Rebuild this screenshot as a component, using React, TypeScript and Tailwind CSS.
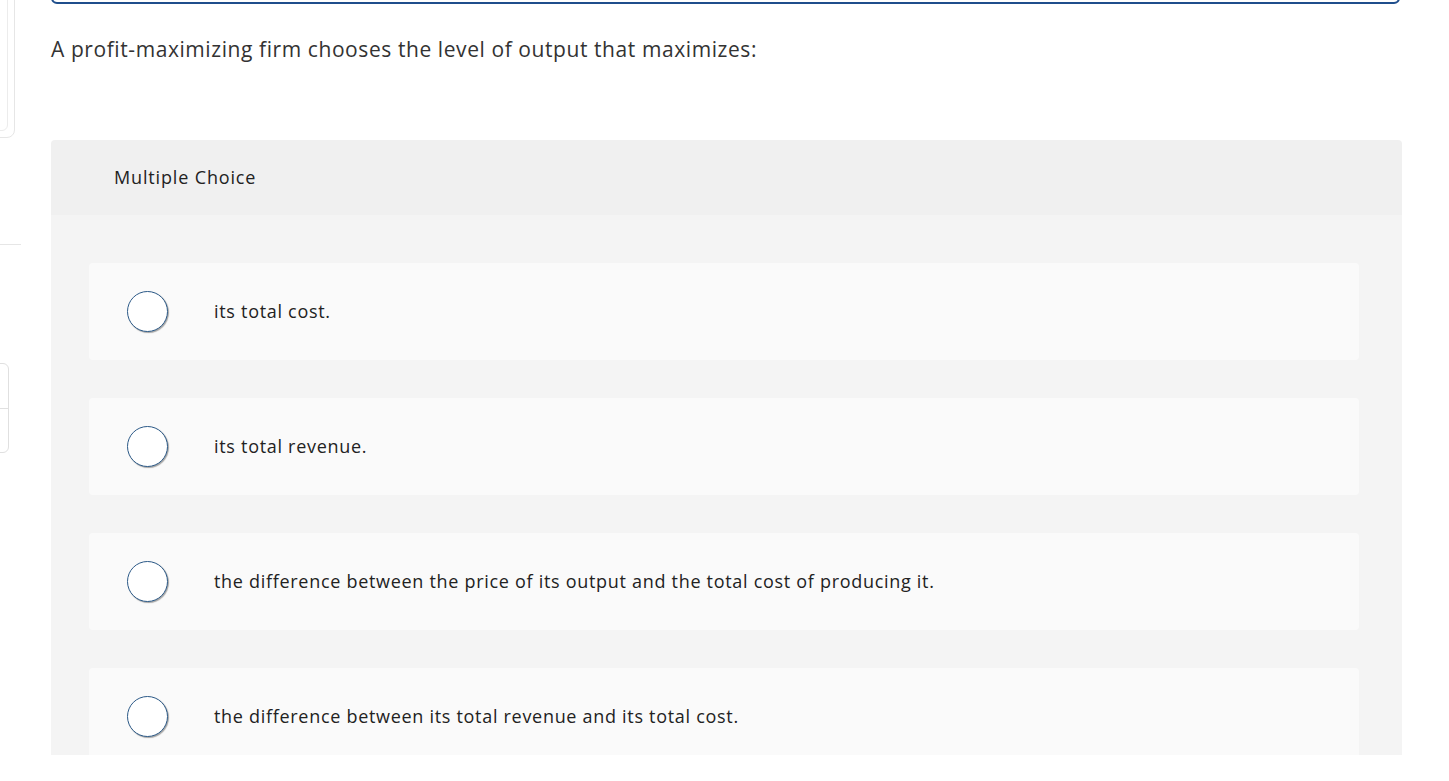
import React from "react";

const options = [
  "its total cost.",
  "its total revenue.",
  "the difference between the price of its output and the total cost of producing it.",
  "the difference between its total revenue and its total cost.",
];

function Radio() {
  return (
    <div className="w-[41px] h-[41px] rounded-full border-[1.5px] border-[#2c5a88] bg-white shadow-[1px_1px_1px_rgba(0,0,0,0.35)] shrink-0" />
  );
}

export default function App() {
  return (
    <div
      className="w-[1449px] h-[781px] bg-white overflow-hidden flex"
      style={{ fontFamily: "'Open Sans', 'Liberation Sans', sans-serif" }}
    >
      {/* left sidebar fragments */}
      <div className="w-[51px] shrink-0 flex flex-col">
        <div className="ml-[-40px] mt-[-20px] w-[55px] h-[158px] border border-[#e6e6e6] rounded-lg p-[6px]">
          <div className="w-full h-full border border-[#ececec] rounded-md" />
        </div>
        <div className="mt-[106px] w-[21px] h-px bg-[#e6e6e6]" />
        <div className="mt-[118px] ml-[-20px] w-[29px] h-[90px] border border-[#e0e0e0] rounded-r-md flex flex-col">
          <div className="h-[45px] border-b border-[#e0e0e0]" />
        </div>
      </div>

      {/* main column */}
      <div className="w-[1351px] flex flex-col">
        <div className="mt-[-36px] h-[40px] w-[1349px] border-2 border-[#1f4e8c] rounded-md" />
        <p className="mt-[30px] text-[21px] leading-[30px] tracking-[0.58px] text-[#333333]">
          A profit-maximizing firm chooses the level of output that maximizes:
        </p>
        <div className="mt-[76px] h-[615px] rounded-t overflow-hidden flex flex-col">
          <div className="h-[75px] bg-[#f0f0f0] flex items-center pl-[63px] text-[18px] tracking-[0.85px] text-[#222222] shrink-0">
            Multiple Choice
          </div>
          <div className="flex-1 bg-[#f4f4f4] pt-[48px] pl-[38px] pr-[43px] flex flex-col gap-[38px]">
            {options.map((o) => (
              <div
                key={o}
                className="h-[97px] shrink-0 bg-[#fafafa] rounded flex items-center pl-[38px]"
              >
                <Radio />
                <span className="ml-[46px] text-[18px] tracking-[0.7px] text-[#222222]">{o}</span>
              </div>
            ))}
          </div>
        </div>
      </div>
    </div>
  );
}
